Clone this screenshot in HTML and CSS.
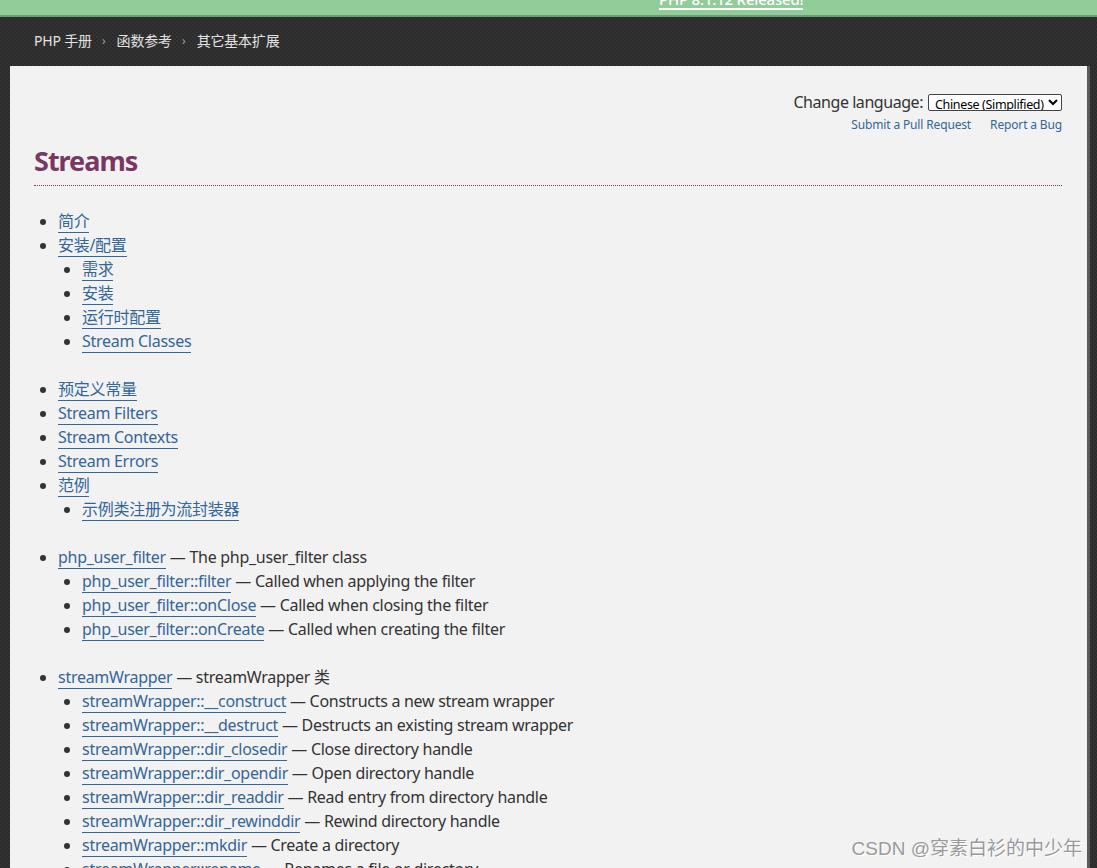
FILE: index.html
```html
<!DOCTYPE html>
<html lang="zh-CN">
<head>
<meta charset="utf-8">
<title>PHP: Streams - Manual</title>
<link rel="stylesheet" href="styles.css">
</head>
<body>
<div class="announce"><a class="announce-link" href="#">PHP 8.1.12 Released!</a></div>
<nav class="crumbs">
  <a href="#">PHP 手册</a><span class="sep">›</span><a href="#">函数参考</a><span class="sep">›</span><a href="#">其它基本扩展</a>
</nav>
<div class="layout">
  <main class="panel">
    <div class="tools">
      <div class="lang-row">
        <label class="lang-label">Change language:</label>
        <select class="lang-select"><option>Chinese (Simplified)</option></select>
      </div>
      <div class="edit-row">
        <a href="#">Submit a Pull Request</a>
        <a href="#">Report a Bug</a>
      </div>
    </div>
    <h1 class="title">Streams</h1>
    <ul class="chunk">
      <li><a href="#">简介</a></li>
      <li><a href="#">安装/配置</a>
        <ul class="sub">
          <li><a href="#">需求</a></li>
          <li><a href="#">安装</a></li>
          <li><a href="#">运行时配置</a></li>
          <li><a href="#">Stream Classes</a></li>
        </ul>
      </li>
    </ul>
    <ul class="chunk">
      <li><a href="#">预定义常量</a></li>
      <li><a href="#">Stream Filters</a></li>
      <li><a href="#">Stream Contexts</a></li>
      <li><a href="#">Stream Errors</a></li>
      <li><a href="#">范例</a>
        <ul class="sub">
          <li><a href="#">示例类注册为流封装器</a></li>
        </ul>
      </li>
    </ul>
    <ul class="chunk">
      <li><a href="#">php_user_filter</a> — The php_user_filter class
        <ul class="sub">
          <li><a href="#">php_user_filter::filter</a> — Called when applying the filter</li>
          <li><a href="#">php_user_filter::onClose</a> — Called when closing the filter</li>
          <li><a href="#">php_user_filter::onCreate</a> — Called when creating the filter</li>
        </ul>
      </li>
    </ul>
    <ul class="chunk">
      <li><a href="#">streamWrapper</a> — streamWrapper 类
        <ul class="sub">
          <li><a href="#">streamWrapper::__construct</a> — Constructs a new stream wrapper</li>
          <li><a href="#">streamWrapper::__destruct</a> — Destructs an existing stream wrapper</li>
          <li><a href="#">streamWrapper::dir_closedir</a> — Close directory handle</li>
          <li><a href="#">streamWrapper::dir_opendir</a> — Open directory handle</li>
          <li><a href="#">streamWrapper::dir_readdir</a> — Read entry from directory handle</li>
          <li><a href="#">streamWrapper::dir_rewinddir</a> — Rewind directory handle</li>
          <li><a href="#">streamWrapper::mkdir</a> — Create a directory</li>
          <li><a href="#">streamWrapper::rename</a> — Renames a file or directory</li>
        </ul>
      </li>
    </ul>
  </main>
  <div class="side"></div>
</div>
<div class="watermark">CSDN @穿素白衫的中少年</div>
</body>
</html>
```
FILE: styles.css
```css
html, body {
  margin: 0;
  padding: 0;
  height: 100%;
  overflow: hidden;
}
body {
  font-family: "Noto Sans", "Noto Sans CJK SC", sans-serif;
  color: #333;
  background-color: #303030;
  background-image: repeating-conic-gradient(#2b2b2b 0 25%, #333333 0 50%);
  background-size: 4px 4px;
}
.announce {
  height: 15px;
  display: flex;
  align-items: flex-start;
  background: #92cc99;
  border-bottom: 2px solid #6b9f76;
  overflow: hidden;
  padding-left: 659px;
}
.announce-link {
  display: block;
  margin-top: -9px;
  color: #fff;
  font-size: 15px;
  font-weight: 500;
  line-height: 16px;
  letter-spacing: -0.2px;
  text-decoration: none;
  border-bottom: 2px solid #fff;
  padding-bottom: 1px;
}
.crumbs {
  height: 46px;
  display: flex;
  align-items: center;
  padding: 0 0 3px 34px;
  font-size: 14px;
  letter-spacing: -0.2px;
}
.crumbs a {
  color: #e2e2e2;
  text-decoration: none;
}
.crumbs .sep {
  color: #999;
  margin: 0 11px 0 10px;
  font-size: 13px;
}
.layout {
  display: flex;
  padding-left: 10px;
  height: 100%;
}
.panel {
  width: 1028px;
  background: #f2f2f2;
  padding: 26px 25px 0 24px;
  border-right: 3px solid #5a5a5a;
  font-size: 16px;
  line-height: 24px;
  letter-spacing: -0.28px;
}
.tools {
  display: flex;
  flex-direction: column;
  align-items: flex-end;
}
.lang-row {
  display: flex;
  align-items: center;
  gap: 5px;
  height: 20px;
}
.lang-label {
  font-size: 16px;
  color: #333;
  letter-spacing: -0.45px;
}
.lang-select {
  font-family: "Noto Sans", sans-serif;
  font-size: 12.5px;
  letter-spacing: -0.35px;
  height: 17px;
  width: 134px;
  padding: 0 0 0 2px;
  border: 1px solid #444;
  border-radius: 2px;
  background: #fff;
  color: #000;
}
.edit-row {
  display: flex;
  gap: 19px;
  margin-top: 4px;
  font-size: 12px;
  line-height: 18px;
  letter-spacing: -0.15px;
}
.edit-row a {
  color: #336699;
  text-decoration: none;
}
.title {
  margin: 7px 0 -1px;
  font-size: 27px;
  line-height: 40px;
  font-weight: 700;
  letter-spacing: -1px;
  color: #793862;
  border-bottom: 1px dotted #793862;
  padding-bottom: 4px;
}
.chunk {
  margin: 24px 0 0;
  padding-left: 24px;
  list-style: disc;
}
.sub {
  margin: 0;
  padding-left: 24px;
  list-style: disc;
}
.chunk a {
  color: #336699;
  text-decoration: none;
  border-bottom: 1px solid #336699;
}
.side {
  flex: 1;
}
.watermark {
  position: absolute;
  right: 15px;
  bottom: 8px;
  font-family: "Liberation Sans", "Noto Sans CJK SC", sans-serif;
  font-size: 19px;
  color: #9a9a9a;
  text-shadow: 1px 1px 0 #fff;
}
```
